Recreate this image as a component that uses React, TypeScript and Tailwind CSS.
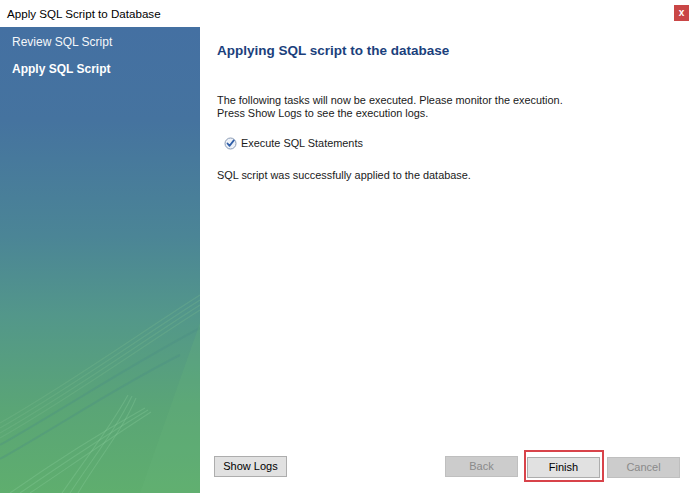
import React from "react";

const ui = { fontFamily: '"Liberation Sans", Arial, sans-serif' };

export default function App() {
  return (
    <div className="w-[694px] h-[493px] bg-white flex flex-col overflow-hidden text-[#1a1a1a]" style={ui}>
      <TitleBar />
      <div className="flex flex-1 min-h-0">
        <Sidebar />
        <Content />
      </div>
    </div>
  );
}

function TitleBar() {
  return (
    <div className="h-[27px] flex items-center justify-between pl-[7px] pr-[5px] shrink-0">
      <span className="text-[11.6px] text-black">Apply SQL Script to Database</span>
      <button className="w-[15px] h-[16px] bg-[#c94646] text-white text-[10px] font-bold leading-none flex items-center justify-center mt-[-2px]">
        x
      </button>
    </div>
  );
}

function Sidebar() {
  return (
    <div className="relative w-[200px] shrink-0 bg-[linear-gradient(180deg,#4470a2_0%,#45739f_20%,#4b8596_45%,#53978a_62%,#5aa576_82%,#5fae6e_100%)] overflow-hidden">
      <Swoosh />
      <ul className="relative flex flex-col pt-[6px] pl-[12px] text-[12px] text-white">
        <li className="h-[18px] leading-[18px] opacity-95">Review SQL Script</li>
        <li className="h-[18px] leading-[18px] mt-[9px] font-bold">Apply SQL Script</li>
      </ul>
    </div>
  );
}

function Swoosh() {
  return (
    <svg className="absolute left-0 bottom-0" width="200" height="220" viewBox="0 0 200 220" fill="none">
      <g stroke="#7fc08f" strokeOpacity="0.28" strokeWidth="1.2">
        <path d="M0 150 C70 110 140 60 200 22" />
        <path d="M0 155 C70 115 140 65 200 27" />
        <path d="M0 160 C70 120 140 70 200 32" />
        <path d="M0 165 C70 125 140 75 200 37" />
      </g>
      <g stroke="#4a8a86" strokeOpacity="0.3" strokeWidth="2">
        <path d="M0 172 C60 138 130 92 200 55" />
        <path d="M0 186 C60 152 120 112 180 82" />
      </g>
      <g stroke="#8fd0a0" strokeOpacity="0.3" strokeWidth="1.1">
        <path d="M10 220 C60 185 100 160 145 135" />
        <path d="M20 220 C68 187 106 162 148 137" />
        <path d="M30 220 C76 189 112 164 151 139" />
        <path d="M62 220 C86 185 110 155 128 122" />
        <path d="M70 220 C93 185 116 156 132 123" />
        <path d="M78 220 C99 185 122 158 136 125" />
      </g>
      <path d="M140 220 L200 50 L200 220 Z" fill="#67b57a" fillOpacity="0.22" />
    </svg>
  );
}

function Content() {
  return (
    <div className="flex-1 flex flex-col pl-[17px] pr-[14px]">
      <h1 className="mt-[14px] text-[13.5px] font-bold text-[#1b3f7c]">Applying SQL script to the database</h1>
      <div className="mt-[33px] text-[10.9px] leading-[13px]">
        <p>The following tasks will now be executed. Please monitor the execution.</p>
        <p>Press Show Logs to see the execution logs.</p>
      </div>
      <div className="mt-[15px] ml-[7px] flex items-center gap-[4px] text-[10.9px]">
        <CheckIcon />
        <span>Execute SQL Statements</span>
      </div>
      <p className="mt-[15px] text-[10.9px]">SQL script was successfully applied to the database.</p>
      <div className="mt-auto mb-[11px] -ml-[3px] flex items-center">
        <Btn label="Show Logs" />
        <div className="flex-1" />
        <Btn label="Back" disabled />
        <div className="ml-[6px] border-2 border-[#d8434a] pl-[1px] pr-[2px] py-[2px]">
          <Btn label="Finish" />
        </div>
        <div className="ml-[3px]">
          <Btn label="Cancel" disabled />
        </div>
      </div>
    </div>
  );
}

function Btn({ label, disabled }: { label: string; disabled?: boolean }) {
  return (
    <button
      className={
        "w-[73px] h-[21px] text-[11px] border " +
        (disabled
          ? "bg-[#cccccc] border-[#bfbfbf] text-[#8a8a8a]"
          : "bg-[#e1e1e1] border-[#adadad] text-black")
      }
    >
      {label}
    </button>
  );
}

function CheckIcon() {
  return (
    <svg width="13" height="13" viewBox="0 0 13 13">
      <circle cx="6.5" cy="6.5" r="5.5" fill="#eef2f8" stroke="#8a9bb5" strokeWidth="1" />
      <path d="M3.5 6.5 L5.6 8.8 L9.8 3.4" fill="none" stroke="#2f5ea8" strokeWidth="1.8" strokeLinecap="round" strokeLinejoin="round" />
    </svg>
  );
}
